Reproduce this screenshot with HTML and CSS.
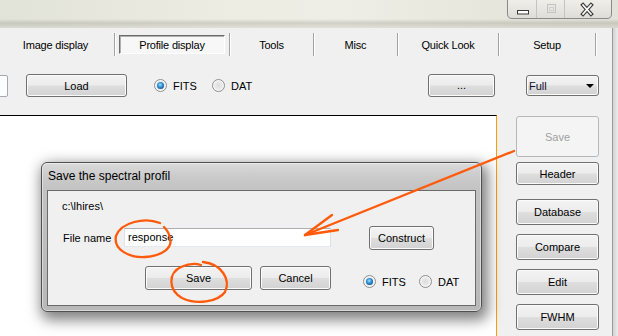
FILE: index.html
```html
<!DOCTYPE html>
<html>
<head>
<meta charset="utf-8">
<link rel="stylesheet" href="styles.css">
</head>
<body>
<div class="window">
  <div class="titlebar">
    <svg class="caption" width="106" height="20" viewBox="0 0 106 20">
      <defs>
        <linearGradient id="cb" x1="0" y1="0" x2="0" y2="1">
          <stop offset="0" stop-color="#efefea"/>
          <stop offset="1" stop-color="#dedcd6"/>
        </linearGradient>
      </defs>
      <path d="M0.5 0 V14 Q0.5 18.5 5 18.5 H100 Q104.5 18.5 104.5 14 V0" fill="url(#cb)" stroke="#8a8a8a"/>
      <line x1="29.5" y1="0" x2="29.5" y2="18" stroke="#c4c4c4"/>
      <line x1="57.5" y1="0" x2="57.5" y2="18" stroke="#c4c4c4"/>
      <rect x="10.5" y="10.5" width="11" height="3.5" fill="#fff" stroke="#3a3a3a"/>
      <rect x="40.5" y="4.5" width="8" height="8" fill="none" stroke="#c2c2c2"/>
      <rect x="42.5" y="7.5" width="4" height="3" fill="none" stroke="#cfcfcf"/>
      <path d="M76 5 L84 14 M84 5 L76 14" stroke="#3c3c3c" stroke-width="4" stroke-linecap="square"/>
      <path d="M76 5 L84 14 M84 5 L76 14" stroke="#ffffff" stroke-width="1.6" stroke-linecap="square"/>
    </svg>
  </div>
  <div class="frame-row">
    <div class="client">
      <div class="tabs">
        <div class="tab tab-first">Image display</div>
        <div class="tab tab-profile"><span class="tab-active">Profile display</span></div>
        <div class="tab tab-tools">Tools</div>
        <div class="tab tab-misc">Misc</div>
        <div class="tab tab-quick">Quick Look</div>
        <div class="tab tab-setup">Setup</div>
      </div>
      <div class="toolbar">
        <div class="pathbox"></div>
        <div class="btn btn-load">Load</div>
        <div class="opt opt-fits"><span class="radio on"></span><span>FITS</span></div>
        <div class="opt"><span class="radio"></span><span>DAT</span></div>
        <div class="btn btn-dots">...</div>
        <div class="combo"><span>Full</span><span class="arrow"></span></div>
      </div>
      <div class="main">
        <div class="plot"></div>
        <div class="side">
          <div class="btn btn-disabled btn-save">Save</div>
          <div class="btn btn-header">Header</div>
          <div class="btn btn-side btn-db">Database</div>
          <div class="btn btn-side">Compare</div>
          <div class="btn btn-side">Edit</div>
          <div class="btn btn-side">FWHM</div>
        </div>
      </div>
    </div>
    <div class="rframe"></div>
  </div>

  <div class="dialog">
    <div class="dialog-title">Save the spectral profil</div>
    <div class="dialog-body">
      <div class="path">c:\lhires\</div>
      <div class="fname-row">
        <div class="fname-label">File name :</div>
        <div class="textbox">response</div>
        <div class="btn btn-construct">Construct</div>
      </div>
      <div class="btn-row">
        <div class="btn btn-dsave">Save</div>
        <div class="btn btn-cancel">Cancel</div>
        <div class="dlg-radios">
          <div class="opt opt-dfits"><span class="radio on"></span><span>FITS</span></div>
          <div class="opt"><span class="radio"></span><span>DAT</span></div>
        </div>
      </div>
    </div>
  </div>

  <svg class="annot" width="618" height="336" viewBox="0 0 618 336">
    <g fill="none" stroke="#ff5a0a" stroke-width="2.3" stroke-linecap="round" stroke-linejoin="round">
      <path d="M514 151 L305 235"/>
      <path d="M305 235 L332 215"/>
      <path d="M305 235 L338 230"/>
      <path d="M160 223 C145 217, 121 222, 116 236 C113 250, 130 258, 145 257 C162 256, 173 248, 170 238 C169 233, 167 230, 164 227"/>
      <path d="M203 262 C222 264, 231 280, 225 292 C218 302, 196 305, 182 298 C168 290, 168 273, 181 267 C188 264, 195 263, 201 265"/>
    </g>
  </svg>
</div>
</body>
</html>
```

FILE: styles.css
```css
* { box-sizing: border-box; }
html, body { margin: 0; padding: 0; }
body {
  width: 618px;
  height: 336px;
  overflow: hidden;
  background: #f0f0f0;
  font-family: "Liberation Sans", Arial, sans-serif;
  font-size: 11px;
  color: #000;
}
.window {
  position: relative;
  width: 618px;
  height: 336px;
  display: flex;
  flex-direction: column;
}
.titlebar {
  flex: none;
  height: 28px;
  display: flex;
  justify-content: flex-end;
  align-items: flex-start;
  padding-right: 5px;
  background:
    linear-gradient(180deg, rgba(160,160,150,0) 0, rgba(160,160,150,0) 19px, rgba(150,150,140,0.35) 23px, rgba(160,160,150,0.25) 26px, rgba(200,200,195,0.3) 28px),
    linear-gradient(90deg, #e2e3d8 0, #ecece2 35%, #eeeee6 55%, #e6e6dc 80%, #e2e2d9 100%);
}
.caption { display: block; }
.frame-row {
  flex: 1;
  display: flex;
  min-height: 0;
}
.client {
  width: 613px;
  border-right: 1px solid #9a9a9a;
  background: #f0f0f0;
  display: flex;
  flex-direction: column;
}
.rframe {
  flex: 1;
  background: linear-gradient(90deg, #d2d2d2, #ececec);
}

/* tabs */
.tabs {
  display: flex;
  margin-top: 5px;
  height: 23px;
}
.tab {
  display: flex;
  align-items: center;
  justify-content: center;
  border-right: 1px solid #a3a3a3;
  box-shadow: 1px 0 0 #ffffff;
  letter-spacing: -0.2px;
}
.tab-first { width: 115px; padding-right: 3px; }
.tab-profile { width: 115px; justify-content: flex-start; padding-left: 4px; }
.tab-tools { width: 84px; }
.tab-misc { width: 84px; }
.tab-quick { width: 101px; }
.tab-setup { width: 97px; }
.tab-active {
  width: 106px;
  height: 19px;
  display: flex;
  align-items: center;
  justify-content: center;
  border: 1px solid;
  border-color: #6b6b6b #ffffff #ffffff #6b6b6b;
  box-shadow: inset 1px 1px 0 #b0b0b0;
  background: #f7f7f7;
}

/* buttons */
.btn {
  display: flex;
  align-items: center;
  justify-content: center;
  border: 1px solid #707070;
  border-radius: 3px;
  background: linear-gradient(180deg, #f3f3f3 0%, #ececec 48%, #dedede 52%, #d2d2d2 100%);
  box-shadow: inset 0 0 0 1px #fbfbfb;
  font-size: 11px;
  color: #000;
  flex: none;
}
.btn-disabled {
  border-color: #b4b8bb;
  background: #f4f4f4;
  box-shadow: none;
  color: #a0a0a0;
}

/* toolbar */
.toolbar {
  display: flex;
  align-items: center;
  margin-top: 18px;
  height: 23px;
}
.pathbox {
  width: 68px;
  height: 22px;
  margin-left: -60px;
  border: 1px solid #a6a9b0;
  border-radius: 2px;
  background: #fbfdff;
}
.btn-load { margin-left: 18px; width: 101px; height: 23px; }
.opt {
  display: flex;
  align-items: center;
  gap: 6px;
  font-size: 11px;
}
.opt-fits { margin-left: 27px; width: 58px; }
.radio {
  position: relative;
  display: block;
  width: 13px;
  height: 13px;
  border-radius: 50%;
  border: 1px solid #8e8f8f;
  background: radial-gradient(circle at 50% 50%, #dcdcdc 0, #ececec 55%, #fbfbfb 100%);
  box-shadow: inset 0 0 0 1px #f6f6f6;
  flex: none;
}
.radio.on::after {
  content: "";
  position: absolute;
  left: 2px;
  top: 2px;
  width: 7px;
  height: 7px;
  border-radius: 50%;
  background: radial-gradient(circle at 45% 40%, #a8e4ff 0, #3a9ce0 35%, #11508e 80%, #0b3866 100%);
}
.btn-dots {
  margin-left: auto;
  width: 67px;
  height: 23px;
  align-items: flex-end;
  padding-bottom: 5px;
  line-height: 1;
}
.combo {
  margin-left: 31px;
  margin-right: 13px;
  width: 73px;
  height: 21px;
  display: flex;
  align-items: center;
  padding-left: 2px;
  border: 1px solid #707070;
  border-radius: 3px;
  background: linear-gradient(180deg, #f3f3f3 0%, #ececec 48%, #dedede 52%, #d2d2d2 100%);
  box-shadow: inset 0 0 0 1px #fbfbfb;
  color: #101030;
}
.arrow {
  margin-left: auto;
  margin-right: 4px;
  width: 0;
  height: 0;
  border-left: 4px solid transparent;
  border-right: 4px solid transparent;
  border-top: 4px solid #000;
}

/* main area */
.main {
  flex: 1;
  display: flex;
  margin-top: 18px;
  min-height: 0;
}
.plot {
  width: 497px;
  background: #ffffff;
  border-top: 1px solid #000000;
  border-right: 1px solid #ff9c00;
}
.side {
  margin-left: 19px;
  width: 83px;
  display: flex;
  flex-direction: column;
  padding-top: 1px;
}
.side .btn { width: 83px; }
.btn-save { height: 41px; }
.btn-header { margin-top: 5px; height: 23px; }
.btn-side { margin-top: 9px; height: 26px; }
.btn-db { margin-top: 14px; }

/* dialog */
.dialog {
  position: absolute;
  left: 41px;
  top: 162px;
  width: 441px;
  height: 150px;
  border: 1px solid #505050;
  border-radius: 6px;
  padding: 0 5px 5px 5px;
  background: linear-gradient(180deg, #dadada 0, #cacaca 14px, #c2c2c2 28px, #b8b8b8 100%);
  box-shadow: inset 0 0 0 1px rgba(255,255,255,0.45), 3px 5px 14px 3px rgba(0,0,0,0.5);
  display: flex;
  flex-direction: column;
}
.dialog-title {
  height: 27px;
  line-height: 27px;
  padding-left: 1px;
  font-size: 12px;
  color: #000;
}
.dialog-body {
  flex: 1;
  border: 1px solid #6a6a6a;
  background: #f0f0f0;
  padding: 8px 0 0 14px;
}
.path {
  height: 14px;
  line-height: 14px;
}
.fname-row {
  display: flex;
  align-items: center;
  margin-top: 12px;
  height: 25px;
}
.fname-label {
  width: 62px;
  padding-left: 1px;
}
.textbox {
  width: 207px;
  height: 19px;
  border: 1px solid #abadb3;
  border-color: #abadb3 #dbdfe6 #e3e9ef #e2e3ea;
  background: #ffffff;
  padding-left: 3px;
  line-height: 17px;
}
.btn-construct { margin-left: 38px; width: 65px; height: 24px; }
.btn-row {
  display: flex;
  align-items: flex-start;
  margin-top: 16px;
  height: 24px;
}
.btn-dsave { margin-left: 83px; width: 107px; height: 24px; }
.btn-cancel { margin-left: 8px; width: 71px; height: 24px; }
.dlg-radios {
  display: flex;
  margin-left: 32px;
  margin-top: 9px;
}
.opt-dfits { width: 56px; }

.annot {
  position: absolute;
  left: 0;
  top: 0;
  pointer-events: none;
}
```
